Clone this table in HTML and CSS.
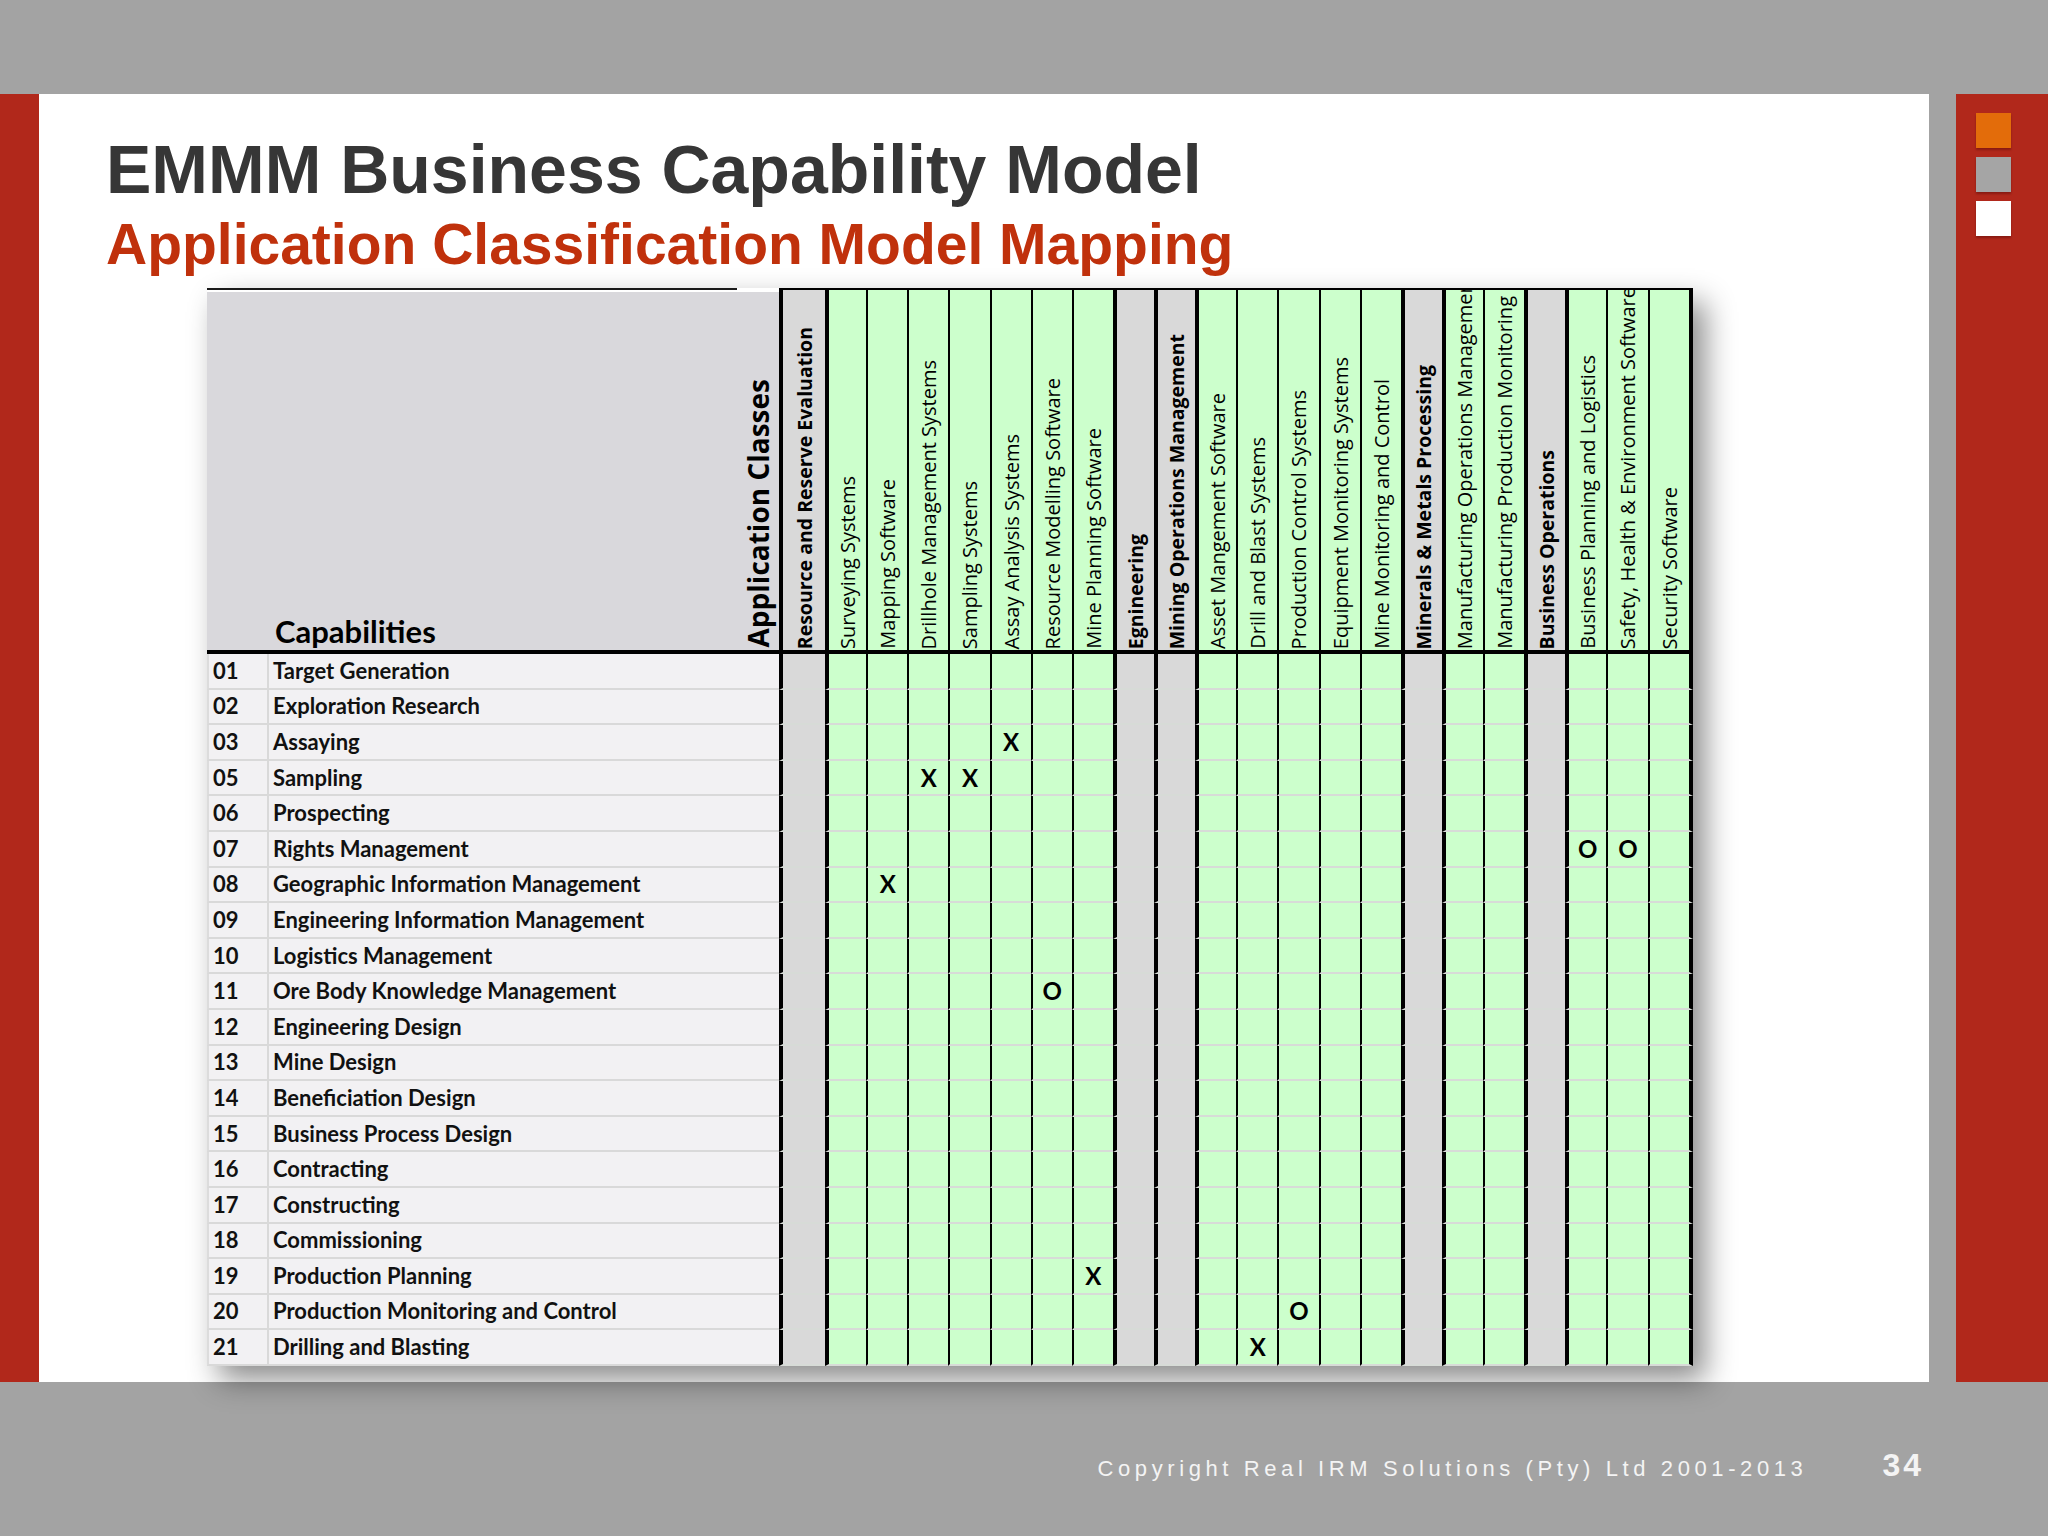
FILE: index.html
```html
<!DOCTYPE html>
<html lang="en">
<head>
<meta charset="utf-8">
<title>EMMM Business Capability Model</title>
<link rel="stylesheet" href="styles.css">
</head>
<body>
<div class="topband"></div>
<div class="stage">
  <div class="side-left"></div>
  <main class="slide">
    <h1 class="title">EMMM Business Capability Model</h1>
    <h2 class="subtitle">Application Classification Model Mapping</h2>
    <div class="matrix">
      <div class="head">
        <div class="h-cap">
          <span class="cap-label">Capabilities</span>
          <span class="app-label">Application Classes</span>
        </div>
        <div class="h g tk"><span>Resource and Reserve Evaluation</span></div>
        <div class="h tk"><span>Surveying Systems</span></div>
        <div class="h"><span>Mapping Software</span></div>
        <div class="h"><span>Drillhole Management Systems</span></div>
        <div class="h"><span>Sampling Systems</span></div>
        <div class="h"><span>Assay Analysis Systems</span></div>
        <div class="h"><span>Resource Modelling Software</span></div>
        <div class="h"><span>Mine Planning Software</span></div>
        <div class="h g tk"><span>Egnineering</span></div>
        <div class="h g tk"><span>Mining Operations Management</span></div>
        <div class="h tk"><span>Asset Mangement Software</span></div>
        <div class="h"><span>Drill and Blast Systems</span></div>
        <div class="h"><span>Production Control Systems</span></div>
        <div class="h"><span>Equipment Monitoring Systems</span></div>
        <div class="h"><span>Mine Monitoring and Control</span></div>
        <div class="h g tk"><span>Minerals &amp; Metals Processing</span></div>
        <div class="h tk"><span>Manufacturing Operations Management</span></div>
        <div class="h"><span>Manufacturing Production Monitoring</span></div>
        <div class="h g tk"><span>Business Operations</span></div>
        <div class="h tk"><span>Business Planning and Logistics</span></div>
        <div class="h"><span>Safety, Health &amp; Environment Software</span></div>
        <div class="h last"><span>Security Software</span></div>
      </div>

      <div class="row"><span class="num">01</span><span class="name">Target Generation</span><span></span><span></span><span></span><span></span><span></span><span></span><span></span><span></span><span></span><span></span><span></span><span></span><span></span><span></span><span></span><span></span><span></span><span></span><span></span><span></span><span></span><span></span></div>
      <div class="row"><span class="num">02</span><span class="name">Exploration Research</span><span></span><span></span><span></span><span></span><span></span><span></span><span></span><span></span><span></span><span></span><span></span><span></span><span></span><span></span><span></span><span></span><span></span><span></span><span></span><span></span><span></span><span></span></div>
      <div class="row"><span class="num">03</span><span class="name">Assaying</span><span></span><span></span><span></span><span></span><span></span><span>X</span><span></span><span></span><span></span><span></span><span></span><span></span><span></span><span></span><span></span><span></span><span></span><span></span><span></span><span></span><span></span><span></span></div>
      <div class="row"><span class="num">05</span><span class="name">Sampling</span><span></span><span></span><span></span><span>X</span><span>X</span><span></span><span></span><span></span><span></span><span></span><span></span><span></span><span></span><span></span><span></span><span></span><span></span><span></span><span></span><span></span><span></span><span></span></div>
      <div class="row"><span class="num">06</span><span class="name">Prospecting</span><span></span><span></span><span></span><span></span><span></span><span></span><span></span><span></span><span></span><span></span><span></span><span></span><span></span><span></span><span></span><span></span><span></span><span></span><span></span><span></span><span></span><span></span></div>
      <div class="row"><span class="num">07</span><span class="name">Rights Management</span><span></span><span></span><span></span><span></span><span></span><span></span><span></span><span></span><span></span><span></span><span></span><span></span><span></span><span></span><span></span><span></span><span></span><span></span><span></span><span>O</span><span>O</span><span></span></div>
      <div class="row"><span class="num">08</span><span class="name">Geographic Information Management</span><span></span><span></span><span>X</span><span></span><span></span><span></span><span></span><span></span><span></span><span></span><span></span><span></span><span></span><span></span><span></span><span></span><span></span><span></span><span></span><span></span><span></span><span></span></div>
      <div class="row"><span class="num">09</span><span class="name">Engineering Information Management</span><span></span><span></span><span></span><span></span><span></span><span></span><span></span><span></span><span></span><span></span><span></span><span></span><span></span><span></span><span></span><span></span><span></span><span></span><span></span><span></span><span></span><span></span></div>
      <div class="row"><span class="num">10</span><span class="name">Logistics Management</span><span></span><span></span><span></span><span></span><span></span><span></span><span></span><span></span><span></span><span></span><span></span><span></span><span></span><span></span><span></span><span></span><span></span><span></span><span></span><span></span><span></span><span></span></div>
      <div class="row"><span class="num">11</span><span class="name">Ore Body Knowledge Management</span><span></span><span></span><span></span><span></span><span></span><span></span><span>O</span><span></span><span></span><span></span><span></span><span></span><span></span><span></span><span></span><span></span><span></span><span></span><span></span><span></span><span></span><span></span></div>
      <div class="row"><span class="num">12</span><span class="name">Engineering Design</span><span></span><span></span><span></span><span></span><span></span><span></span><span></span><span></span><span></span><span></span><span></span><span></span><span></span><span></span><span></span><span></span><span></span><span></span><span></span><span></span><span></span><span></span></div>
      <div class="row"><span class="num">13</span><span class="name">Mine Design</span><span></span><span></span><span></span><span></span><span></span><span></span><span></span><span></span><span></span><span></span><span></span><span></span><span></span><span></span><span></span><span></span><span></span><span></span><span></span><span></span><span></span><span></span></div>
      <div class="row"><span class="num">14</span><span class="name">Beneficiation Design</span><span></span><span></span><span></span><span></span><span></span><span></span><span></span><span></span><span></span><span></span><span></span><span></span><span></span><span></span><span></span><span></span><span></span><span></span><span></span><span></span><span></span><span></span></div>
      <div class="row"><span class="num">15</span><span class="name">Business Process Design</span><span></span><span></span><span></span><span></span><span></span><span></span><span></span><span></span><span></span><span></span><span></span><span></span><span></span><span></span><span></span><span></span><span></span><span></span><span></span><span></span><span></span><span></span></div>
      <div class="row"><span class="num">16</span><span class="name">Contracting</span><span></span><span></span><span></span><span></span><span></span><span></span><span></span><span></span><span></span><span></span><span></span><span></span><span></span><span></span><span></span><span></span><span></span><span></span><span></span><span></span><span></span><span></span></div>
      <div class="row"><span class="num">17</span><span class="name">Constructing</span><span></span><span></span><span></span><span></span><span></span><span></span><span></span><span></span><span></span><span></span><span></span><span></span><span></span><span></span><span></span><span></span><span></span><span></span><span></span><span></span><span></span><span></span></div>
      <div class="row"><span class="num">18</span><span class="name">Commissioning</span><span></span><span></span><span></span><span></span><span></span><span></span><span></span><span></span><span></span><span></span><span></span><span></span><span></span><span></span><span></span><span></span><span></span><span></span><span></span><span></span><span></span><span></span></div>
      <div class="row"><span class="num">19</span><span class="name">Production Planning</span><span></span><span></span><span></span><span></span><span></span><span></span><span></span><span>X</span><span></span><span></span><span></span><span></span><span></span><span></span><span></span><span></span><span></span><span></span><span></span><span></span><span></span><span></span></div>
      <div class="row"><span class="num">20</span><span class="name">Production Monitoring and Control</span><span></span><span></span><span></span><span></span><span></span><span></span><span></span><span></span><span></span><span></span><span></span><span></span><span>O</span><span></span><span></span><span></span><span></span><span></span><span></span><span></span><span></span><span></span></div>
      <div class="row"><span class="num">21</span><span class="name">Drilling and Blasting</span><span></span><span></span><span></span><span></span><span></span><span></span><span></span><span></span><span></span><span></span><span></span><span>X</span><span></span><span></span><span></span><span></span><span></span><span></span><span></span><span></span><span></span><span></span></div>
    </div>
  </main>
  <div class="gap"></div>
  <aside class="side-right">
    <i class="sq orange"></i>
    <i class="sq grey"></i>
    <i class="sq white"></i>
  </aside>
</div>
<footer class="footer">
  <span class="copy">Copyright Real IRM Solutions (Pty) Ltd 2001-2013</span>
  <span class="pg">34</span>
</footer>
</body>
</html>
```

FILE: styles.css
```css
* { box-sizing: border-box; }
html, body { margin: 0; padding: 0; }
body {
  width: 2048px;
  height: 1536px;
  overflow: hidden;
  background: #a3a3a3;
  font-family: "Liberation Sans", Arial, sans-serif;
}

.topband { height: 94px; }

.stage { display: flex; height: 1288px; }
.side-left { width: 39px; background: #b1281b; }
.slide {
  width: 1890px;
  background: #fff;
  padding: 41px 0 0 67px;
}
.gap { width: 27px; }
.side-right {
  width: 92px;
  background: #b1281b;
  padding: 19px 0 0 20px;
  display: flex;
  flex-direction: column;
  gap: 9px;
}
.sq { display: block; width: 35px; height: 35px; box-shadow: 0 2px 2px rgba(60, 0, 0, .35); }
.sq.orange { background: #e36c0a; }
.sq.grey { background: #a5a5a5; }
.sq.white { background: #fff; }

.title {
  margin: 0;
  font: bold 68px/68px "Liberation Sans", Arial, sans-serif;
  color: #363636;
}
.subtitle {
  margin: 13px 0 0;
  font: bold 57px/57px "Liberation Sans", Arial, sans-serif;
  color: #c0310c;
}

/* matrix */
.matrix {
  margin: 15px 0 0 101px;
  width: max-content;
  background: #fff;
  box-shadow: 12px 14px 28px rgba(0, 0, 0, .45);
}
.head, .row {
  display: grid;
  grid-template-columns: 62px 510px 46px repeat(20, 41.14px) 45.14px;
}
.head { height: 366px; }

.h-cap {
  grid-column: 1 / 3;
  display: flex;
  align-items: flex-end;
  padding: 0 5px 3px 68px;
  border-bottom: 4px solid #000;
  background:
    linear-gradient(90deg, #1a1a1a 530px, #fff 530px) top left / 100% 2px no-repeat,
    linear-gradient(#fff, #fff) 0 2px / 100% 2px no-repeat,
    #d9d8dc;
}
.cap-label {
  font: bold 31px/31px "Lato", "Open Sans", sans-serif;
  color: #000;
}
.app-label {
  margin-left: auto;
  writing-mode: vertical-rl;
  transform: rotate(180deg);
  white-space: nowrap;
  font: bold 28px/32px "Open Sans", sans-serif;
  color: #000;
}

.h {
  display: flex;
  flex-direction: column;
  justify-content: flex-end;
  align-items: center;
  overflow: hidden;
  padding-bottom: 1px;
  background: #ccffcc;
  border-top: 2px solid #000;
  border-left: 2px solid #000;
  border-bottom: 4px solid #000;
}
.h span {
  writing-mode: vertical-rl;
  transform: rotate(180deg);
  white-space: nowrap;
  font: 20px/25px "Open Sans", sans-serif;
  color: #000;
}
.h.g { background: #d9d9d9; }
.h.g span { font-weight: bold; font-size: 19.5px; }
.h.tk { border-left-width: 4px; }
.h.last { border-right: 4px solid #000; }

.row { height: 35.6px; }
.row > span {
  display: flex;
  align-items: center;
  justify-content: center;
  background: #ccffcc;
  border-left: 2px solid #000;
  border-bottom: 2px solid #d7dbd7;
  font: bold 24px/1 "Lato", "Open Sans", sans-serif;
  color: #000;
}
.row > .num,
.row > .name {
  justify-content: flex-start;
  background: #f2f1f3;
  border-left: 0;
  border-bottom-color: #d9d9d9;
  font: bold 22px/1 "Lato", "Open Sans", sans-serif;
  color: #111;
}
.row > .num { padding-left: 4px; border-left: 2px solid #dcdcdc; border-right: 2px solid #d9d9d9; }
.row > .name { padding-left: 4px; }

.row > :nth-child(3),
.row > :nth-child(11),
.row > :nth-child(12),
.row > :nth-child(18),
.row > :nth-child(21) { background: #d9d9d9; }

.row > :nth-child(3),
.row > :nth-child(4),
.row > :nth-child(11),
.row > :nth-child(12),
.row > :nth-child(13),
.row > :nth-child(18),
.row > :nth-child(19),
.row > :nth-child(21),
.row > :nth-child(22) { border-left-width: 4px; }
.row > :nth-child(24) { border-right: 4px solid #000; }

/* footer */
.footer {
  height: 154px;
  display: flex;
  justify-content: flex-end;
  align-items: baseline;
  padding: 67px 124px 0 0;
  color: #f4f4f4;
}
.copy {
  font: 22px/32px "Liberation Sans", Arial, sans-serif;
  letter-spacing: 4.6px;
}
.pg {
  margin-left: 75px;
  font: bold 32px/32px "Liberation Sans", Arial, sans-serif;
  letter-spacing: 3px;
}
```
